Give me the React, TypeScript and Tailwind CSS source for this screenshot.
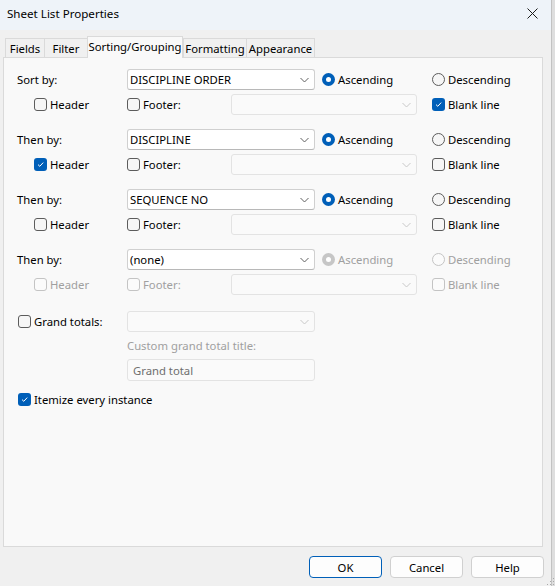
import React from "react";

const FONT = "font-['Segoe_UI','Noto_Sans',sans-serif]";

function Check({ checked = false, disabled = false }: { checked?: boolean; disabled?: boolean }) {
  if (checked) {
    return (
      <span className="w-[13px] h-[13px] rounded-[3px] bg-[#005fb8] flex items-center justify-center shrink-0">
        <svg width="9" height="9" viewBox="0 0 9 9">
          <path d="M2 4.6 L3.8 6.3 L7.2 2.6" fill="none" stroke="#ffffff" strokeWidth="1" />
        </svg>
      </span>
    );
  }
  return (
    <span
      className={
        "w-[13px] h-[13px] rounded-[3px] border shrink-0 " +
        (disabled ? "border-[#c4c4c4] bg-[#fbfbfb]" : "border-[#5c5c5c] bg-[#f6f6f6]")
      }
    />
  );
}

function Radio({ checked = false, disabled = false }: { checked?: boolean; disabled?: boolean }) {
  if (checked) {
    return (
      <span
        className={
          "w-[13px] h-[13px] rounded-full flex items-center justify-center shrink-0 " +
          (disabled ? "bg-[#c6c6c6]" : "bg-[#005fb8]")
        }
      >
        <span className="w-[5px] h-[5px] rounded-full bg-white" />
      </span>
    );
  }
  return (
    <span
      className={
        "w-[13px] h-[13px] rounded-full border shrink-0 " +
        (disabled ? "border-[#c4c4c4] bg-[#fbfbfb]" : "border-[#5c5c5c] bg-[#f6f6f6]")
      }
    />
  );
}

function Chevron({ color }: { color: string }) {
  return (
    <svg width="9" height="6" viewBox="0 0 9 6">
      <path d="M0.5 1 L4.5 5 L8.5 1" fill="none" stroke={color} strokeWidth="1" />
    </svg>
  );
}

function Select({ value, width, disabled = false }: { value?: string; width: string; disabled?: boolean }) {
  return (
    <div
      className={
        width +
        " h-[21px] rounded-[3px] border flex items-center justify-between pl-[2px] pr-[5px] shrink-0 " +
        (disabled ? "border-[#e3e3e3] bg-[#fafafa]" : "border-[#d0d0d0] border-b-[#b8b8b8] bg-white")
      }
    >
      <span className="text-black">{value}</span>
      <Chevron color={disabled ? "#c8c8c8" : "#606060"} />
    </div>
  );
}

function Labeled({
  children,
  label,
  disabled = false,
}: {
  children: React.ReactNode;
  label: string;
  disabled?: boolean;
}) {
  return (
    <div className="flex items-center gap-[3px]">
      {children}
      <span className={disabled ? "text-[#a0a0a0]" : "text-black"}>{label}</span>
    </div>
  );
}

type Group = {
  label: string;
  value: string;
  header: boolean;
  blank: boolean;
  disabled?: boolean;
};

const groups: Group[] = [
  { label: "Sort by:", value: "DISCIPLINE ORDER", header: false, blank: true },
  { label: "Then by:", value: "DISCIPLINE", header: true, blank: false },
  { label: "Then by:", value: "SEQUENCE NO", header: false, blank: false },
  { label: "Then by:", value: "(none)", header: false, blank: false, disabled: true },
];

function SortGroup({ g }: { g: Group }) {
  const d = !!g.disabled;
  return (
    <div className="flex flex-col gap-[4px]">
      <div className="flex items-center h-[21px]">
        <div className="w-[110px] text-black">{g.label}</div>
        <Select value={g.value} width="w-[188px]" />
        <div className="w-[110px] ml-[7px]">
          <Labeled label="Ascending" disabled={d}>
            <Radio checked disabled={d} />
          </Labeled>
        </div>
        <Labeled label="Descending" disabled={d}>
          <Radio disabled={d} />
        </Labeled>
      </div>
      <div className="flex items-center h-[21px] pl-[17px]">
        <div className="w-[93px]">
          <Labeled label="Header" disabled={d}>
            <Check checked={g.header} disabled={d} />
          </Labeled>
        </div>
        <div className="w-[104px]">
          <Labeled label="Footer:" disabled={d}>
            <Check disabled={d} />
          </Labeled>
        </div>
        <Select width="w-[186px]" disabled />
        <div className="ml-[15px]">
          <Labeled label="Blank line" disabled={d}>
            <Check checked={g.blank} disabled={d} />
          </Labeled>
        </div>
      </div>
    </div>
  );
}

function Button({ label, primary = false }: { label: string; primary?: boolean }) {
  return (
    <div
      className={
        "w-[73px] h-[22px] rounded-[4px] border bg-[#fdfdfd] flex items-center justify-center text-black " +
        (primary ? "border-[#005fb8]" : "border-[#d0d0d0]")
      }
    >
      {label}
    </div>
  );
}

function Tab({ label, width, active = false }: { label: string; width: string; active?: boolean }) {
  return (
    <div
      className={
        width +
        " flex items-center justify-center border border-b-0 text-black " +
        (active
          ? "h-[22px] bg-[#f9f9f9] border-[#dadada] mb-[-1px] relative z-10 pb-[3px]"
          : "h-[19px] bg-[#f0f0f0] border-[#dadada] border-r-0")
      }
    >
      {label}
    </div>
  );
}

export default function App() {
  return (
    <div className={"w-[555px] h-[586px] flex text-[11.3px] leading-[15px] " + FONT}>
      <div className="w-[551px] h-full flex flex-col bg-[#f0f0f0] relative">
        <div className="h-[30px] bg-[#eef3f9] flex items-center justify-between pl-[7px] pr-[13px] pb-[4px] shrink-0">
          <span className="text-black text-[11.6px]">Sheet List Properties</span>
          <svg width="11" height="11" viewBox="0 0 11 11">
            <path d="M0.5 0.5 L10.5 10.5 M10.5 0.5 L0.5 10.5" stroke="#1a1a1a" strokeWidth="1" />
          </svg>
        </div>
        <div className="flex flex-col px-[3px] pt-[6px]">
          <div className="flex items-end pl-[2px] h-[21px]">
            <Tab label="Fields" width="w-[39px]" />
            <Tab label="Filter" width="w-[43px]" />
            <Tab label="Sorting/Grouping" width="w-[96px]" active />
            <Tab label="Formatting" width="w-[63px]" />
            <div className="border-r border-[#dadada]">
              <Tab label="Appearance" width="w-[68px]" />
            </div>
          </div>
          <div className="w-[540px] h-[490px] bg-[#f9f9f9] border border-[#dadada] pt-[11px] pl-[13px] flex flex-col">
            <div className="flex flex-col gap-[14px]">
              {groups.map((g, i) => (
                <SortGroup key={i} g={g} />
              ))}
            </div>
            <div className="flex items-center h-[21px] mt-[16px]">
              <div className="w-[110px] pl-[1px]">
                <Labeled label="Grand totals:">
                  <Check />
                </Labeled>
              </div>
              <Select width="w-[188px]" disabled />
            </div>
            <div className="ml-[110px] mt-[6px] text-[#a0a0a0]">Custom grand total title:</div>
            <div className="ml-[110px] mt-[6px] w-[188px] h-[22px] rounded-[3px] border border-[#e3e3e3] bg-[#fafafa] flex items-center pl-[5px] text-[#6e6e6e]">
              Grand total
            </div>
            <div className="mt-[11px] pl-[1px]">
              <Labeled label="Itemize every instance">
                <Check checked />
              </Labeled>
            </div>
          </div>
        </div>
        <div className="flex justify-end gap-[8px] pr-[7px] mt-[9px]">
          <Button label="OK" primary />
          <Button label="Cancel" />
          <Button label="Help" />
        </div>
        <svg className="absolute right-[-4px] bottom-0" width="9" height="9" viewBox="0 0 9 9">
          <rect x="7" y="1" width="1" height="1" fill="#a8a8a8" />
          <rect x="4" y="4" width="1" height="1" fill="#a8a8a8" />
          <rect x="7" y="4" width="1" height="1" fill="#a8a8a8" />
          <rect x="1" y="7" width="1" height="1" fill="#a8a8a8" />
          <rect x="4" y="7" width="1" height="1" fill="#a8a8a8" />
          <rect x="7" y="7" width="1" height="1" fill="#a8a8a8" />
        </svg>
      </div>
      <div className="w-[4px] h-full bg-[#dedede] border-l border-[#c2c2c2]" />
    </div>
  );
}
